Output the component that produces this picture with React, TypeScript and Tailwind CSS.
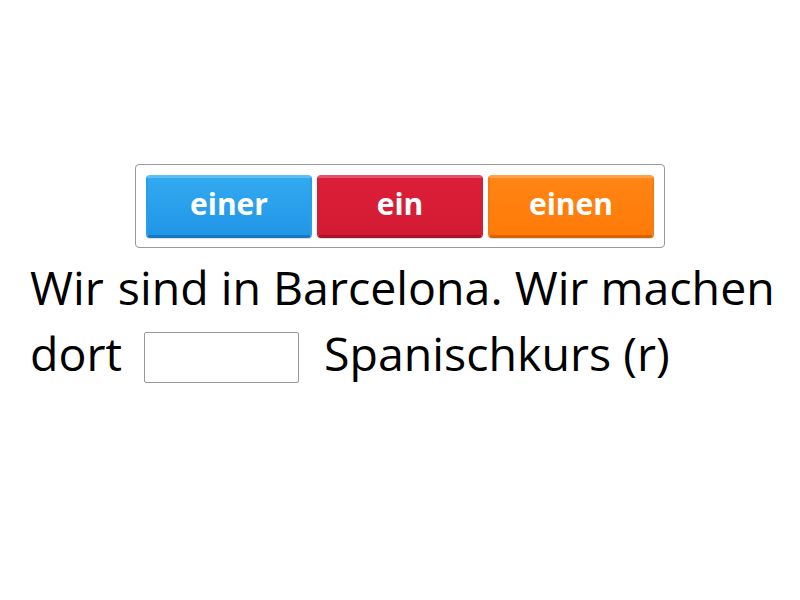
import React from "react";

const btns = [
  { t: "einer", c: "bg-[linear-gradient(#33a9f0,#2196e6)] border-t-[#5cc0f7] border-b-[#1677c4] border-x-[#2a9fe9]" },
  { t: "ein", c: "bg-[linear-gradient(#dc1f38,#d41a33)] border-t-[#e5506a] border-b-[#a8152a] border-x-[#d02038]" },
  { t: "einen", c: "bg-[linear-gradient(#ff8515,#ff7a08)] border-t-[#ffa04a] border-b-[#d86200] border-x-[#f57a10]" },
];

export default function App() {
  return (
    <div className="w-[800px] h-[600px] bg-white overflow-hidden" style={{ fontFamily: '"Open Sans", sans-serif' }}>
      <div className="pt-[164px] flex justify-center">
        <div className="w-[530px] h-[84px] border border-[#9a9a9a] rounded-[4px] flex items-center justify-center gap-[5px]">
          {btns.map((b) => (
            <div
              key={b.t}
              className={`w-[166px] h-[63px] rounded-[4px] border-y-[3px] border-x-[2px] flex items-center justify-center text-white font-bold text-[30px] leading-none shadow-[0_1px_1px_rgba(0,0,0,0.15)] ${b.c}`}
            >
              <span className="-mt-[5px]">{b.t}</span>
            </div>
          ))}
        </div>
      </div>
      <div className="mt-[6px] pl-[30px] text-[46.5px] leading-[66px] text-black whitespace-nowrap">
        <span>Wir </span>
        <span className="ml-[2px]">sind </span>
        <span>in </span>
        <span>Barcelona. Wir machen</span>
        <br />
        <span>dort</span>
        <span className="inline-block align-middle ml-[22px] mr-[25px] w-[155px] h-[51px] border border-[#999] rounded-[2px] bg-white -mt-[3px]"></span>
        <span>Spanischkurs (r)</span>
      </div>
    </div>
  );
}
